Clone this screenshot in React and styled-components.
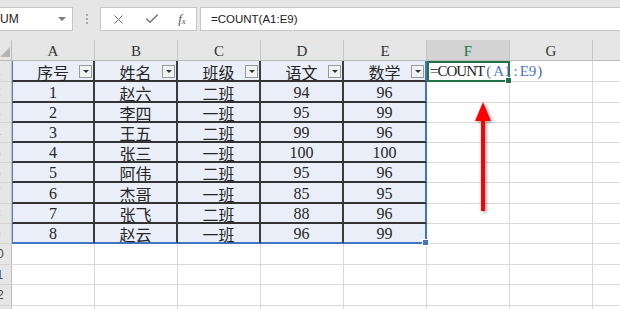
import * as React from "react"
import styled, { createGlobalStyle } from "styled-components"
import { X, Check } from "lucide-react"

const GlobalStyle = createGlobalStyle`
    html, body {
        margin: 0;
        padding: 0;
        background: #ffffff;
        overflow: hidden;
    }
`

const Window = styled.div`
    width: 620px;
    height: 309px;
    overflow: hidden;
    display: flex;
    flex-direction: column;
    background: #ffffff;
    font-family: "Liberation Serif", "Noto Sans CJK SC", serif;
`

const Toolbar = styled.div`
    height: 40px;
    flex-shrink: 0;
    box-sizing: border-box;
    padding-top: 7px;
    display: flex;
    align-items: flex-start;
    background: #e6e6e6;
`
const NameBox = styled.div`
    width: 73px;
    height: 24px;
    box-sizing: border-box;
    background: #ffffff;
    border: 1px solid #c6c6c6;
    border-left: none;
    padding-right: 6px;
    display: flex;
    align-items: center;
    justify-content: space-between;
    font: 12px "Liberation Sans", Arial, sans-serif;
    color: #222222;
`
const Caret = styled.span`
    width: 0;
    height: 0;
    border-left: 4px solid transparent;
    border-right: 4px solid transparent;
    border-top: 4px solid #7a7a7a;
`
const Grip = styled.div`
    width: 27px;
    height: 24px;
    display: flex;
    flex-direction: column;
    align-items: center;
    justify-content: center;
    gap: 2px;
    span {
        width: 2px;
        height: 2px;
        background: #a8a8a8;
    }
`
const FxBox = styled.div`
    width: 97px;
    height: 24px;
    box-sizing: border-box;
    background: #ffffff;
    border: 1px solid #c6c6c6;
    display: grid;
    grid-template-columns: 34px 33px 1fr;
    align-items: center;
    justify-items: center;
    color: #6e6e6e;
`
const FxLabel = styled.span`
    font: italic 13px "Liberation Serif", serif;
    color: #555555;
    sub {
        font-size: 9px;
        vertical-align: -1px;
    }
`
const FormulaBar = styled.div`
    flex: 1;
    margin-left: 3px;
    height: 24px;
    box-sizing: border-box;
    background: #ffffff;
    border: 1px solid #c6c6c6;
    border-right: none;
    padding-left: 10px;
    display: flex;
    align-items: center;
    font: 11.5px "Liberation Sans", Arial, sans-serif;
    color: #222222;
`

const Sheet = styled.div`
    position: relative;
    flex: 1;
    overflow: hidden;
    display: grid;
    grid-template-columns: 12px repeat(8, 83px);
    grid-template-rows: 21px 21px 21px 20px 20px 20px 20px 21px 20px 20px 21px 20px 21px 20px;
`
const Corner = styled.div`
    position: relative;
    background: #e6e6e6;
    border-right: 1px solid #bdbdbd;
    border-bottom: 1px solid #bdbdbd;
    box-sizing: border-box;
    &::after {
        content: "";
        position: absolute;
        right: 1px;
        bottom: 3px;
        width: 0;
        height: 0;
        border-left: 10px solid transparent;
        border-bottom: 10px solid #b5b5b5;
    }
`
const ColHead = styled.div`
    box-sizing: border-box;
    background: ${p => (p.$active ? "#d3d3d3" : "#e6e6e6")};
    color: ${p => (p.$active ? "#217346" : "#333333")};
    border-right: 1px solid #c8c8c8;
    border-bottom: 1px solid #bdbdbd;
    display: flex;
    align-items: center;
    justify-content: center;
    padding-top: 2px;
    font-size: 15px;
`
const RowHead = styled.div`
    box-sizing: border-box;
    background: #e6e6e6;
    border-right: 1px solid #bdbdbd;
    border-bottom: 1px solid #d4d4d4;
    overflow: hidden;
    display: flex;
    align-items: center;
    justify-content: flex-end;
`
const RowNum = styled.span`
    flex-shrink: 0;
    width: 28px;
    text-align: center;
    font: 12px "Liberation Sans", Arial, sans-serif;
    color: #444444;
`
const DataCell = styled.div`
    position: relative;
    box-sizing: border-box;
    background: #e9eef8;
    border-left: ${p => (p.$first ? "1px solid #5b7cc2" : "none")};
    border-right: 2px solid ${p => (p.$edge ? "#4472c4" : "#3c3c3c")};
    border-bottom: 2px solid ${p => (p.$bottom ? "#4472c4" : "#333333")};
    display: flex;
    align-items: center;
    justify-content: center;
    padding-top: 2px;
    font-size: 16px;
    color: #262626;
`
const FilterButton = styled.span`
    position: absolute;
    right: 1px;
    bottom: 2px;
    width: 13px;
    height: 13px;
    box-sizing: border-box;
    background: #f2f2f2;
    border: 1px solid #9a9a9a;
    display: flex;
    align-items: center;
    justify-content: center;
    &::after {
        content: "";
        border-left: 3px solid transparent;
        border-right: 3px solid transparent;
        border-top: 3px solid #333333;
    }
`
const EmptyCell = styled.div`
    box-sizing: border-box;
    border-right: 1px solid #d9d9d9;
    border-bottom: 1px solid #d9d9d9;
`
const EditCell = styled.div`
    position: relative;
    z-index: 2;
    box-sizing: border-box;
    border: 2px solid #217346;
    padding-left: 1px;
    display: flex;
    align-items: center;
    white-space: nowrap;
    overflow: visible;
    font-size: 15px;
    color: #1a1a1a;
`
const Func = styled.span`
    letter-spacing: -1px;
`
const Ref = styled.span`
    color: ${p => (p.$paren ? "#4d6aa3" : "#4a78cc")};
    margin: ${p => p.$gap || "0"};
`
const Caret2 = styled.span`
    display: inline-block;
    width: 2px;
    height: 17px;
    margin-left: 3px;
    background: #3a3a3a;
`
const FillHandle = styled.span`
    position: absolute;
    right: -4px;
    bottom: -4px;
    width: 5px;
    height: 5px;
    background: ${p => p.$color};
    border: 1px solid #ffffff;
    z-index: 3;
`
const Arrow = styled.svg`
    position: absolute;
    left: 466px;
    top: 56px;
    overflow: visible;
    z-index: 4;
`

const columns = ["A", "B", "C", "D", "E", "F", "G", "H"]
const header = ["序号", "姓名", "班级", "语文", "数学"]
const rows = [
    ["1", "赵六", "二班", "94", "96"],
    ["2", "李四", "一班", "95", "99"],
    ["3", "王五", "二班", "99", "96"],
    ["4", "张三", "一班", "100", "100"],
    ["5", "阿伟", "二班", "95", "96"],
    ["6", "杰哥", "一班", "85", "95"],
    ["7", "张飞", "二班", "88", "96"],
    ["8", "赵云", "一班", "96", "99"],
]
const TOTAL_ROWS = 13

const App = () => {
    const table = [header, ...rows]
    const lines = []
    for (let r = 0; r < TOTAL_ROWS; r++) {
        lines.push(
            <RowHead key={`rh${r}`}>
                <RowNum>{r + 1}</RowNum>
            </RowHead>
        )
        const record = table[r]
        for (let c = 0; c < columns.length; c++) {
            const key = `${r}-${c}`
            if (record && c < 5) {
                lines.push(
                    <DataCell
                        key={key}
                        $first={c === 0}
                        $edge={c === 4}
                        $bottom={r === table.length - 1}
                    >
                        {record[c]}
                        {r === 0 && <FilterButton />}
                        {r === table.length - 1 && c === 4 && <FillHandle $color="#4472c4" />}
                    </DataCell>
                )
            } else if (r === 0 && c === 5) {
                lines.push(
                    <EditCell key={key}>
                        <Func>=COUNT</Func>
                        <Ref $paren $gap="0 2px 0 2px">(</Ref>
                        <Ref>A1</Ref>
                        <Ref $gap="0 2px">:</Ref>
                        <Ref>E9</Ref>
                        <Ref $paren $gap="0 0 0 1px">)</Ref>
                        <Caret2 />
                        <FillHandle $color="#217346" />
                    </EditCell>
                )
            } else {
                lines.push(<EmptyCell key={key} />)
            }
        }
    }

    return (
        <Window>
            <GlobalStyle />
            <Toolbar>
                <NameBox>
                    <span>UM</span>
                    <Caret />
                </NameBox>
                <Grip>
                    <span />
                    <span />
                    <span />
                </Grip>
                <FxBox>
                    <X size={15} strokeWidth={1.6} />
                    <Check size={16} strokeWidth={2} />
                    <FxLabel>
                        f<sub>x</sub>
                    </FxLabel>
                </FxBox>
                <FormulaBar>=COUNT(A1:E9)</FormulaBar>
            </Toolbar>
            <Sheet>
                <Corner />
                {columns.map(col => (
                    <ColHead key={col} $active={col === "F"}>
                        {col}
                    </ColHead>
                ))}
                {lines}
                <Arrow width="34" height="122" viewBox="0 0 34 122">
                    <defs>
                        <filter id="shade" x="-50%" y="-10%" width="200%" height="130%">
                            <feDropShadow dx="1.5" dy="1.5" stdDeviation="1.5" floodColor="#000" floodOpacity="0.35" />
                        </filter>
                    </defs>
                    <g filter="url(#shade)" fill="#ff0000">
                        <polygon points="17,6 9,25 25,25" />
                        <rect x="15" y="22" width="4" height="93" />
                    </g>
                </Arrow>
            </Sheet>
        </Window>
    )
}

export default App
